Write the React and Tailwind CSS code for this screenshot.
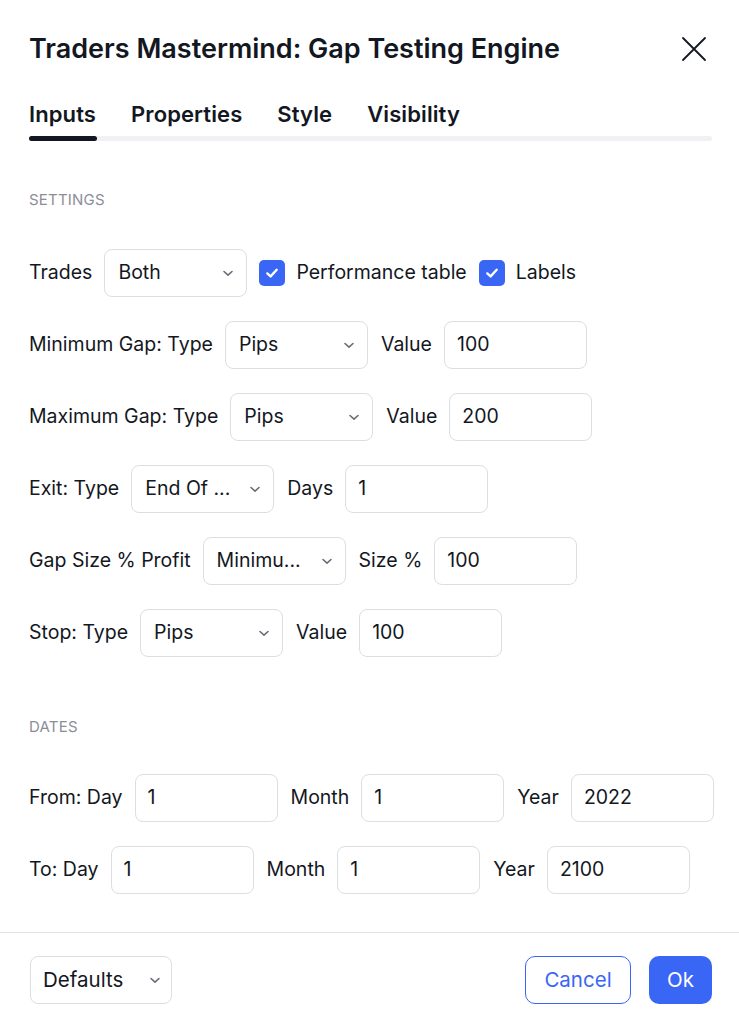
import React from 'react';

const FONT = "font-['Inter','Liberation_Sans',sans-serif]";

const TABS = ['Inputs', 'Properties', 'Style', 'Visibility'];

function Chevron() {
  return (
    <svg width="14" height="14" viewBox="0 0 14 14" fill="none" aria-hidden="true">
      <path d="M3 5.5 7 9.2l4-3.7" stroke="#6a6d78" strokeWidth="1.6" strokeLinecap="round" strokeLinejoin="round" />
    </svg>
  );
}

function Select({ value }) {
  return (
    <div className="flex h-12 w-[143px] shrink-0 items-center justify-between rounded-lg border border-[#dcdee4] bg-white pl-[13px] pr-[11px]">
      <span className="truncate text-[19.5px] text-[#131722]">{value}</span>
      <Chevron />
    </div>
  );
}

function Field({ value }) {
  return (
    <div className="flex h-12 w-[143px] shrink-0 items-center rounded-lg border border-[#dcdee4] bg-white px-[12px]">
      <span className="text-[19.5px] text-[#131722]">{value}</span>
    </div>
  );
}

function Label({ children }) {
  return <span className="shrink-0 whitespace-nowrap text-[19.5px] text-[#131722]">{children}</span>;
}

function Checkbox({ label }) {
  return (
    <div className="flex shrink-0 items-center gap-[11px]">
      <div className="flex h-[26px] w-[26px] items-center justify-center rounded-[5px] bg-[#3a66f6]">
        <svg width="16" height="16" viewBox="0 0 16 16" fill="none" aria-hidden="true">
          <path d="M3.3 8.4 6.6 11.4 12.7 4.8" stroke="white" strokeWidth="2.4" strokeLinecap="round" strokeLinejoin="round" />
        </svg>
      </div>
      <Label>{label}</Label>
    </div>
  );
}

// each row: [label, control] pairs
const SETTINGS_ROWS = [
  [['Minimum Gap: Type', 'select', 'Pips'], ['Value', 'field', '100']],
  [['Maximum Gap: Type', 'select', 'Pips'], ['Value', 'field', '200']],
  [['Exit: Type', 'select', 'End Of ...'], ['Days', 'field', '1']],
  [['Gap Size % Profit', 'select', 'Minimu...'], ['Size %', 'field', '100']],
  [['Stop: Type', 'select', 'Pips'], ['Value', 'field', '100']],
];

const DATE_ROWS = [
  [['From: Day', 'field', '1'], ['Month', 'field', '1'], ['Year', 'field', '2022']],
  [['To: Day', 'field', '1'], ['Month', 'field', '1'], ['Year', 'field', '2100']],
];

function Row({ items }) {
  return (
    <div className="flex h-12 items-center gap-[12px]">
      {items.map(([label, kind, value], i) => (
        <React.Fragment key={i}>
          <div className={i > 0 ? 'ml-px shrink-0' : 'shrink-0'}>
            <Label>{label}</Label>
          </div>
          {kind === 'select' ? <Select value={value} /> : <Field value={value} />}
        </React.Fragment>
      ))}
    </div>
  );
}

function SectionTitle({ children }) {
  return <div className="text-[15px] leading-5 tracking-[0.2px] text-[#8b8e97] uppercase">{children}</div>;
}

export default function App() {
  return (
    <div className={`${FONT} flex h-[1024px] w-[739px] flex-col bg-white antialiased`}>
      {/* Header */}
      <div className="flex items-center justify-between pl-[29px] pr-[32px] pt-[31px]">
        <h1 className="text-[27px] leading-9 font-semibold text-[#131722]">
          Traders Mastermind: Gap Testing Engine
        </h1>
        <svg width="26" height="26" viewBox="0 0 26 26" fill="none" aria-hidden="true">
          <path d="M2 2l22 22M24 2 2 24" stroke="#131722" strokeWidth="1.8" strokeLinecap="round" />
        </svg>
      </div>

      {/* Tabs */}
      <div className="mx-[29px] mt-[33px] mr-[27px]">
        <div className="flex gap-[35px]">
          {TABS.map((t) => (
            <span key={t} className="text-[22px] leading-7 font-semibold tracking-[0.1px] text-[#131722]">
              {t}
            </span>
          ))}
        </div>
        <div className="mt-2 h-[5px] rounded-full bg-[#f0f1f5]">
          <div className="h-[5px] w-[68px] rounded-full bg-[#131722]" />
        </div>
      </div>

      {/* Body */}
      <div className="flex flex-1 flex-col px-[29px]">
        <div className="mt-[49px]">
          <SectionTitle>Settings</SectionTitle>
        </div>
        <div className="mt-[39px] flex flex-col gap-6">
          <div className="flex h-12 items-center gap-[12px]">
            <Label>Trades</Label>
            <Select value="Both" />
            <Checkbox label="Performance table" />
            <Checkbox label="Labels" />
          </div>
          {SETTINGS_ROWS.map((items, i) => (
            <Row key={i} items={items} />
          ))}
        </div>

        <div className="mt-[60px]">
          <SectionTitle>Dates</SectionTitle>
        </div>
        <div className="mt-[37px] flex flex-col gap-6">
          {DATE_ROWS.map((items, i) => (
            <Row key={i} items={items} />
          ))}
        </div>
      </div>

      {/* Footer */}
      <div className="flex items-center justify-between border-t border-[#e0e3eb] px-[27px] pt-[23px] pb-[20px] pl-[30px]">
        <div className="flex h-12 w-[142px] items-center justify-between rounded-lg border border-[#dcdee4] pl-[12px] pr-[9px]">
          <span className="text-[20.5px] text-[#131722]">Defaults</span>
          <Chevron />
        </div>
        <div className="flex items-center gap-[18px]">
          <button className="h-12 w-[106px] rounded-[10px] border-[1.5px] border-[#3a66f6] text-[20.5px] text-[#3a66f6]">
            Cancel
          </button>
          <button className="h-12 w-[63px] rounded-[10px] bg-[#3a66f6] text-[20.5px] text-white">Ok</button>
        </div>
      </div>
    </div>
  );
}
